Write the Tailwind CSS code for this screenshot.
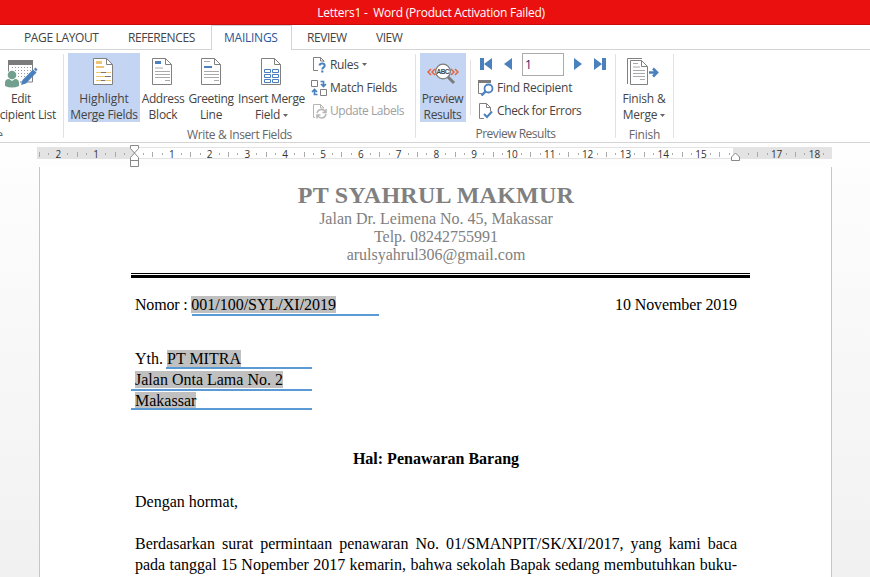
<!DOCTYPE html>
<html lang="id">
<head>
    <meta charset="UTF-8">
    <meta name="viewport" content="width=device-width, initial-scale=1.0">
    <title>Letters1 - Word</title>
    <script src="https://cdn.jsdelivr.net/npm/@tailwindcss/browser@4"></script>
</head>
<body class="w-[870px] h-[577px] flex flex-col overflow-hidden bg-white font-['Open_Sans','Noto_Sans',sans-serif] text-[12px] leading-4 text-[#444]">
    <!-- Title bar -->
    <header class="h-[25px] shrink-0 bg-[#e9100f] border-b border-[#c80c0c] text-white flex items-center justify-center pt-[2px] pr-2 whitespace-pre"><span class="tracking-[-0.24px]">Letters1 -  Word (Product Activation Failed)</span></header>

    <!-- Tabs -->
    <nav class="h-[25px] shrink-0 flex whitespace-nowrap">
        <div class="w-[211px] border-b border-[#d4d4d4] flex items-center pt-[2px] pl-6">
            <span class="w-[104px] tracking-[-0.36px]">PAGE LAYOUT</span>
            <span class="tracking-[-0.4px]">REFERENCES</span>
        </div>
        <div class="w-[81px] border-x border-t border-[#d4d4d4] flex items-center pl-3 text-[#2b579a]"><span class="tracking-[-0.25px]">MAILINGS</span></div>
        <div class="flex-1 border-b border-[#d4d4d4] flex items-center pt-[2px] pl-[15px]">
            <span class="w-[69px] tracking-[-0.45px]">REVIEW</span>
            <span class="tracking-[-0.45px]">VIEW</span>
        </div>
    </nav>

    <!-- Ribbon -->
    <section class="h-[93px] shrink-0 border-b border-[#d4d4d4] flex whitespace-nowrap">
        <div class="w-16 h-[84px] mt-1 border-r border-[#e1e1e1] flex flex-col overflow-hidden">
            <svg class="w-9 h-8 ml-[3px] mt-1 shrink-0" viewBox="3 58 36 32">
                <path d="M8.500 62v14M32.500 62v20H20" fill="none" stroke="#808080"/>
                <path d="M8 60h25v5H8z" fill="#7c7c7c"/>
                <path d="M12 67.500h19M12 70.500h19M12 73.500h19M12 76.500h19" stroke="#999" stroke-dasharray="1 2"/>
                <circle cx="12" cy="75" r="5" fill="#fff"/>
                <circle cx="12" cy="75" r="4.300" fill="#72a08f"/>
                <path d="M5 86v-3q0-4 4-4l3 2 3-2q4 0 4 4v3q-7 3-14 0z" fill="#72a08f"/>
                <path d="M21 85l1.500-5L33 69.500l3.500 3L26 83.500z M34 69l1.500-1.500 2 2L36 71.500z" fill="#4a81bd"/>
            </svg>
            <span class="w-[42px] text-center mt-[1px] tracking-[-0.3px]">Edit</span>
            <span class="self-end mr-[7px] tracking-[-0.3px]">Recipient List</span>
            <span class="mt-1 -ml-16 w-[67px] text-right text-[#666]">ce</span>
        </div>

        <div class="w-[352px] h-[84px] mt-1 border-r border-[#e1e1e1] flex flex-col items-center">
            <div class="flex w-full pl-1 -mt-1 h-[73px]">
                <button class="w-[72px] h-[69px] mt-[3px] bg-[#c3d5f2] flex flex-col items-center">
                    <svg class="w-6 h-8 mt-1 mr-[2px] shrink-0" viewBox="0 0 24 32">
                        <path d="M2.500 1.500h13l6 6v20h-19z" fill="#fff" stroke="#808080"/>
                        <path d="M15.500 1.500v6h6" fill="none" stroke="#808080"/>
                        <path d="M5 4h6v3H5zM5 9h8v2H5z" fill="#eec476"/>
                        <path d="M5 15.500h15M5 19.500h15M5 23.500h15" stroke="#eec476"/>
                        <path d="M10 15.500h5M14 19.500h6M10 23.500h4" stroke="#777"/>
                    </svg>
                    <span class="mt-[2px] tracking-[-0.05px]">Highlight</span>
                    <span class="tracking-[-0.28px]">Merge Fields</span>
                </button>
                <button class="w-[46px] mt-[3px] flex flex-col items-center">
                    <svg class="w-6 h-8 mt-1 mr-[2px] shrink-0" viewBox="0 0 24 32">
                        <path d="M2.500 1.500h13l6 6v20h-19z" fill="#fff" stroke="#808080"/>
                        <path d="M15.500 1.500v6h6" fill="none" stroke="#808080"/>
                        <path d="M5 4h6v3H5z" fill="#4a81bd"/>
                        <path d="M5 11h8M5 14.500h15M5 17.500h15M5 20.500h15M15 23.500h5" stroke="#aaa"/>
                    </svg>
                    <span class="mt-[2px] tracking-[-0.4px]">Address</span>
                    <span class="tracking-[-0.25px]">Block</span>
                </button>
                <button class="w-[50px] mt-[3px] flex flex-col items-center">
                    <svg class="w-6 h-8 mt-1 shrink-0" viewBox="0 0 24 32">
                        <path d="M2.500 1.500h13l6 6v20h-19z" fill="#fff" stroke="#808080"/>
                        <path d="M15.500 1.500v6h6" fill="none" stroke="#808080"/>
                        <path d="M5 9h8v2H5z" fill="#4a81bd"/>
                        <path d="M5 4.500h6M5 14.500h15M5 17.500h15M5 20.500h15M15 23.500h5" stroke="#aaa"/>
                    </svg>
                    <span class="mt-[2px] tracking-[-0.4px]">Greeting</span>
                    <span class="tracking-[-0.3px]">Line</span>
                </button>
                <button class="w-[71px] mt-[3px] flex flex-col items-center">
                    <svg class="w-6 h-8 mt-1 mr-px shrink-0" viewBox="0 0 24 32">
                        <path d="M2.500 1.500h13l6 6v20h-19z" fill="#fff" stroke="#808080"/>
                        <path d="M15.500 1.500v6h6" fill="none" stroke="#808080"/>
                        <path d="M5.500 12.500h6v3h-6zM13.500 12.500h6v3h-6zM5.500 17.500h6v3h-6zM13.500 17.500h6v3h-6zM5.500 22.500h6v3h-6zM13.500 22.500h6v3h-6z" fill="#fff" stroke="#4a81bd"/>
                    </svg>
                    <span class="mt-[2px] tracking-[-0.35px]">Insert Merge</span>
                    <span class="flex items-center gap-[3px] tracking-[-0.25px]">Field<svg class="w-[5px] h-[3px]" viewBox="0 0 5 3"><path d="M0 0h5L2.500 3z" fill="#666"/></svg></span>
                </button>
                <div class="ml-1 mt-[3px] flex flex-col">
                    <div class="h-[23px] flex items-center gap-[3px]">
                        <svg class="w-4 h-4" viewBox="0 0 16 16">
                            <path d="M7 13.500H2.500v-13h7l3.500 3.500v1M9.500.500v3.500H13" fill="none" stroke="#808080"/>
                            <path d="M8.500 8.500q.300-2 2.700-2t2.500 2q0 1.300-1.300 2-1.100.600-1.100 2" fill="none" stroke="#4a81bd" stroke-width="2"/>
                            <path d="M10.200 13.500h2.200v2h-2.200z" fill="#4a81bd"/>
                        </svg>
                        <span class="tracking-[-0.35px]">Rules</span>
                        <svg class="w-[5px] h-[3px]" viewBox="0 0 5 3"><path d="M0 0h5L2.500 3z" fill="#666"/></svg>
                    </div>
                    <div class="h-[23px] flex items-center gap-[3px]">
                        <svg class="w-4 h-4" viewBox="0 0 16 16">
                            <path d="M.500.500h6v6h-6zM9.500 9.500h6v6h-6z" fill="#fff" stroke="#808080"/>
                            <path d="M9.500 1.500h3v5M10 4l2.500 2.500L15 4M6.500 14.500h-3v-5M1 12l2.500-2.500L6 12" fill="none" stroke="#4a81bd" stroke-width="1.700"/>
                        </svg>
                        <span class="tracking-[-0.25px]">Match Fields</span>
                    </div>
                    <div class="h-[23px] flex items-center gap-[3px] text-[#a0a0a0]">
                        <svg class="w-4 h-4" viewBox="0 0 16 16">
                            <path d="M4 14.500H2.500v-13h7l3.500 3.500M9.500 1.500v3.500H13" fill="none" stroke="#b5b5b5"/>
                            <path d="M6 10q1-3.500 4.500-3.500 2.500 0 3.500 2M15 6v3.500h-3.500M15 11q-1 4-4.500 4-2.500 0-3.500-2M6 15.500V12h3.500" fill="none" stroke="#b5b5b5" stroke-width="1.500"/>
                        </svg>
                        <span class="tracking-[-0.46px]">Update Labels</span>
                    </div>
                </div>
            </div>
            <span class="mt-1 text-[#666] tracking-[-0.36px]">Write &amp; Insert Fields</span>
        </div>

        <div class="w-[200px] h-[84px] mt-1 border-r border-[#e1e1e1] flex flex-col items-center">
            <div class="flex w-full pl-1 -mt-1 h-[73px]">
                <button class="w-[46px] h-[69px] mt-[3px] bg-[#c3d5f2] flex flex-col items-center">
                    <svg class="w-8 h-8 mt-1 shrink-0" viewBox="0 0 32 32">
                        <path d="M4 12l-3 3 3 3M8 12l-3 3 3 3M24 12l3 3-3 3M28 12l3 3-3 3" fill="none" stroke="#e2653f" stroke-width="1.500"/>
                        <path d="M21 20l6 6" stroke="#7c7c7c" stroke-width="3"/>
                        <circle cx="16" cy="14.500" r="7.300" fill="#fff" stroke="#7c7c7c" stroke-width="1.300"/>
                        <text x="16" y="17" text-anchor="middle" font-size="6.500" font-weight="700" font-family="Liberation Sans, sans-serif" textLength="13" fill="#444">ABC</text>
                    </svg>
                    <span class="mt-[2px] mr-px tracking-[-0.35px]">Preview</span>
                    <span class="mr-px tracking-[-0.35px]">Results</span>
                </button>
                <div class="w-px h-[55px] mt-[10px] ml-1 bg-[#e1e1e1]"></div>
                <div class="ml-[6px] mt-[3px] flex flex-col">
                    <div class="h-[23px] flex items-center text-[#4a81bd]">
                        <svg class="w-3 h-3 ml-[3px] -mt-px" viewBox="0 0 12 12"><path d="M0 0h4v12H0zM12 0v12L4 6z" fill="currentColor"/></svg>
                        <svg class="w-2 h-3 ml-3 -mt-px" viewBox="0 0 8 12"><path d="M8 0v12L0 6z" fill="currentColor"/></svg>
                        <div class="w-[42px] h-[23px] ml-[10px] border border-[#ababab] bg-white pl-[2px] flex items-center text-[#2a1a6e]">1</div>
                        <svg class="w-2 h-3 ml-[10px] -mt-px" viewBox="0 0 8 12"><path d="M0 0v12l8-6z" fill="currentColor"/></svg>
                        <svg class="w-3 h-3 ml-3 -mt-px" viewBox="0 0 12 12"><path d="M8 0h4v12H8zM0 0v12l8-6z" fill="currentColor"/></svg>
                    </div>
                    <div class="h-[23px] flex items-center gap-[3px]">
                        <svg class="w-[17px] h-4" viewBox="0 0 17 16">
                            <path d="M1.500 3v10.500H5" fill="none" stroke="#808080"/>
                            <path d="M1 0h13v3H1z" fill="#7c7c7c"/>
                            <circle cx="11.500" cy="8.500" r="4" fill="#fff" stroke="#4a81bd" stroke-width="1.800"/>
                            <path d="M8.500 11.500l-4 4" stroke="#4a81bd" stroke-width="2.400"/>
                        </svg>
                        <span class="tracking-[-0.25px]">Find Recipient</span>
                    </div>
                    <div class="h-[23px] flex items-center gap-[3px]">
                        <svg class="w-[17px] h-4" viewBox="0 0 17 16">
                            <path d="M7 15.500H2.500v-15h7l4 4v4M9.500.500v4h4" fill="none" stroke="#808080"/>
                            <path d="M7 11l3 3 5-5.500" fill="none" stroke="#4a81bd" stroke-width="2"/>
                        </svg>
                        <span class="tracking-[-0.38px]">Check for Errors</span>
                    </div>
                </div>
            </div>
            <span class="mt-1 text-[#666] tracking-[-0.48px]">Preview Results</span>
        </div>

        <div class="w-[58px] h-[84px] mt-1 border-r border-[#e1e1e1] flex flex-col items-center">
            <button class="-mt-px h-[70px] flex flex-col items-center">
                <svg class="w-8 h-8 mt-1 mr-[2px] shrink-0" viewBox="0 0 32 32">
                    <path d="M.500 27V1.500H15" fill="none" stroke="#808080"/>
                    <path d="M3.500 3.500h11l6 6v18h-17zM14.500 3.500v6h6" fill="#fff" stroke="#808080"/>
                    <path d="M6 6.500h5M6 10h7M6 13.500h12M6 16.500h12M6 19.500h12M13 22.500h5" stroke="#aaa"/>
                    <path d="M22 15.500h8M26 11.500l4 4-4 4" fill="none" stroke="#4a81bd" stroke-width="2.600"/>
                </svg>
                <span class="mt-[2px] mr-px tracking-[-0.2px]">Finish &amp;</span>
                <span class="mr-px flex items-center gap-[3px] tracking-[-0.2px]">Merge<svg class="w-[5px] h-[3px]" viewBox="0 0 5 3"><path d="M0 0h5L2.500 3z" fill="#666"/></svg></span>
            </button>
            <span class="mt-1 text-[#666] tracking-[-0.2px]">Finish</span>
        </div>
    </section>

    <!-- Ruler and document -->
    <main class="flex-1 flex flex-col bg-linear-to-b from-[#fefefe] to-[#f1f1f1]">
        <svg id="ruler" class="w-full h-6 shrink-0" viewBox="0 143 870 24" font-family="Open Sans, sans-serif" font-size="10" fill="#333" text-anchor="middle">
            <path d="M37 147h795v12H37z" fill="#e3e3e3"/>
            <path d="M134 148h599v10H134z" fill="#fff"/>
            <g id="marks"></g>
            <path d="M130.500 145.500h8v3l-4 4.500-4-4.500zM134.500 153l4 4.500v9h-8v-9zM130.500 160.500h8" fill="#fff" stroke="#888"/>
            <path d="M731.500 160.500v-3.500l4-4 4 4v3.500z" fill="#fff" stroke="#888"/>
        </svg>
        <article class="w-[793px] flex-1 ml-[39px] border-x border-[#c6c6c6] bg-white text-black font-['Liberation_Serif',serif] text-[16px] leading-[21px] whitespace-nowrap pt-[14px] pl-[95px] pr-[94px]">
            <div class="text-[#808080] text-center leading-[18px]">
                <h1 class="text-[24px] leading-7 mb-px font-bold tracking-[0.25px]">PT SYAHRUL MAKMUR</h1>
                <p>Jalan Dr. Leimena No. 45, Makassar</p>
                <p>Telp. 08242755991</p>
                <p>arulsyahrul306@gmail.com</p>
            </div>
            <div class="mt-[9px] -ml-1 -mr-[13px] h-[5px] border-t border-b-3 border-black"></div>
            <div class="mt-4 flex justify-between">
                <p class="relative"><span class="tracking-[-0.2px]">Nomor : </span><span class="bg-[#c0c0c0]">001/100/SYL/XI/2019</span><i class="absolute left-[57px] top-5 w-[187px] h-[2px] bg-[#5b9bd5]"></i></p>
                <p class="tracking-[-0.1px]">10 November 2019</p>
            </div>
            <div class="mt-[33px]">
                <p class="relative">Yth. <span class="bg-[#c0c0c0]">PT MITRA</span><i class="absolute left-[31px] top-[19px] w-[146px] h-[2px] bg-[#5b9bd5]"></i></p>
                <p class="relative"><span class="bg-[#c0c0c0]">Jalan Onta Lama No. 2</span><i class="absolute -left-1 top-5 w-[181px] h-[2px] bg-[#5b9bd5]"></i></p>
                <p class="relative"><span class="bg-[#c0c0c0]">Makassar</span><i class="absolute -left-1 top-[18px] w-[181px] h-[2px] bg-[#5b9bd5]"></i></p>
            </div>
            <p class="mt-[37px] font-bold text-center">Hal: Penawaran Barang</p>
            <p class="mt-[22px]">Dengan hormat,</p>
            <p class="mt-[21px] [text-align-last:justify]">Berdasarkan surat permintaan penawaran No. 01/SMANPIT/SK/XI/2017, yang kami baca</p>
            <p class="[text-align-last:justify]">pada tanggal 15 Nopember 2017 kemarin, bahwa sekolah Bapak sedang membutuhkan buku-</p>
        </article>
    </main>

    <script>
        // Ruler: number on each cm, tick on each half, dot on each quarter
        const marks = document.getElementById('marks');
        let out = '';
        for (let q = -10; q <= 73; q++) {
            const x = 134 + q * 9.45;
            if (q === 0 || q === 64) continue;
            if (q % 4 === 0) {
                out += `<text x="${x}" y="157.500">${Math.abs(q / 4)}</text>`;
            } else {
                const h = q % 2 === 0 ? 5 : 2;
                out += `<rect x="${Math.floor(x)}" y="${h === 5 ? 152 : 153}" width="1" height="${h}" fill="#aaa"/>`;
            }
        }
        marks.innerHTML = out;
    </script>
</body>
</html>
